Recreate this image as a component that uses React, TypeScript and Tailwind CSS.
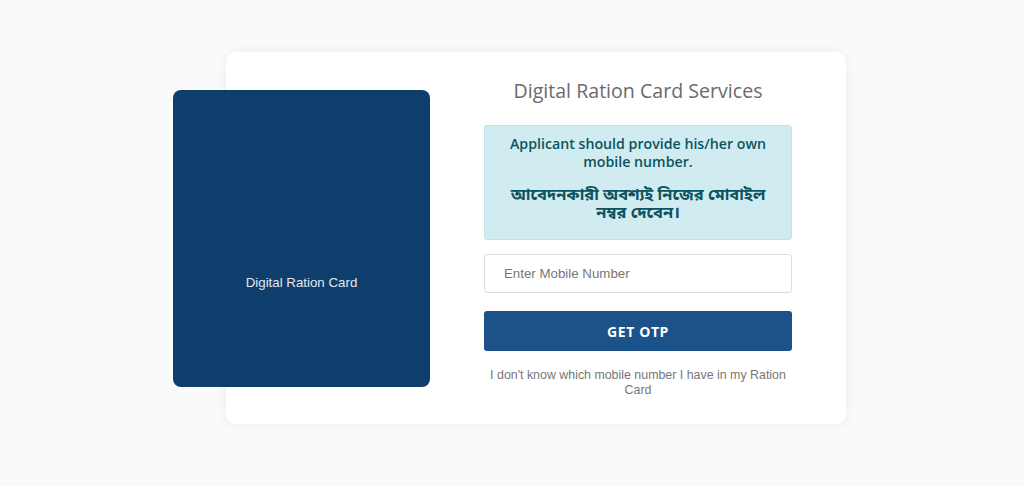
import React from "react";

export default function App() {
  return (
    <div className="w-[1024px] h-[486px] bg-[#fafafa] flex justify-center pt-[52px]" style={{ fontFamily: "Arial, 'Liberation Sans', sans-serif" }}>
      <div className="pl-[53px] ml-[-5px]">
        <div className="w-[620px] h-[372px] bg-white rounded-[10px] shadow-[0_0_12px_rgba(0,0,0,0.06)] flex items-center pr-[54px]">
          <div className="ml-[-53px] w-[257px] h-[297px] shrink-0 rounded-[8px] bg-[#0f3e6d] flex items-center justify-center pt-[89px]">
            <span className="text-[13.3px] text-[#e3e8ef] font-['Liberation_Sans',Arial,sans-serif]">Digital Ration Card</span>
          </div>
          <div className="ml-[54px] w-[308px] self-start pt-[25px] flex flex-col">
            <h1 className="text-center text-[19.6px] leading-[27px] text-[#6b6b6b] font-['Open_Sans',sans-serif]">Digital Ration Card Services</h1>
            <div className="mt-[21px] h-[115px] bg-[#d1ecf1] border border-[#bee5eb] rounded-[3px] px-3 pt-[9px] text-center text-[#0c5460] font-semibold font-['Open_Sans','Noto_Sans_Bengali','Noto_Sans',sans-serif]">
              <p className="text-[14.2px] leading-[18px]">Applicant should provide his/her own mobile number.</p>
              <p className="mt-[14px] text-[16.4px] leading-[18px] font-bold">আবেদনকারী অবশ্যই নিজের মোবাইল নম্বর দেবেন।</p>
            </div>
            <input
              className="mt-[14px] h-[39px] w-full border border-[#dcdcdc] rounded-[3px] pl-[19px] text-[13.3px] text-[#555] placeholder:text-[#777] outline-none font-['Liberation_Sans',Arial,sans-serif]"
              placeholder="Enter Mobile Number"
            />
            <button className="mt-[18px] h-[40px] w-full bg-[#1b5289] rounded-[3px] text-white text-[14px] font-bold tracking-[0.6px] font-['Open_Sans',sans-serif]">
              GET OTP
            </button>
            <p className="mt-[17px] px-[4px] text-center text-[12.4px] leading-[15px] text-[#777] font-['Liberation_Sans',Arial,sans-serif]">
              I don't know which mobile number I have in my Ration Card
            </p>
          </div>
        </div>
      </div>
    </div>
  );
}
